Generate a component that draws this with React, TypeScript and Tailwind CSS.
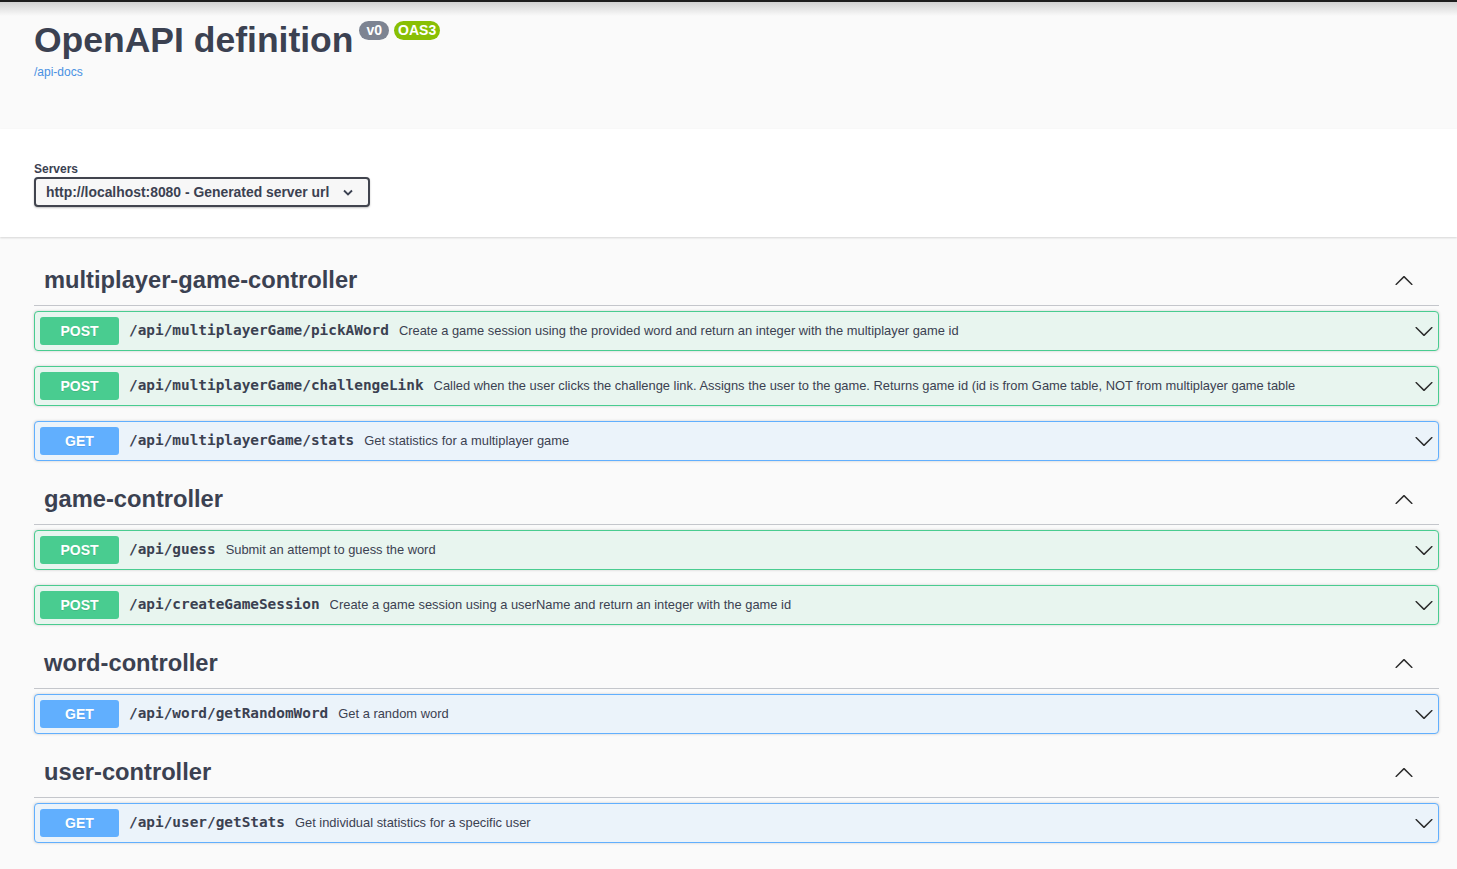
import React from "react";

type Op = { method: "POST" | "GET"; path: string; desc: string };
type Tag = { name: string; ops: Op[] };

const tags: Tag[] = [
  {
    name: "multiplayer-game-controller",
    ops: [
      {
        method: "POST",
        path: "/api/multiplayerGame/pickAWord",
        desc: "Create a game session using the provided word and return an integer with the multiplayer game id",
      },
      {
        method: "POST",
        path: "/api/multiplayerGame/challengeLink",
        desc: "Called when the user clicks the challenge link. Assigns the user to the game. Returns game id (id is from Game table, NOT from multiplayer game table",
      },
      { method: "GET", path: "/api/multiplayerGame/stats", desc: "Get statistics for a multiplayer game" },
    ],
  },
  {
    name: "game-controller",
    ops: [
      { method: "POST", path: "/api/guess", desc: "Submit an attempt to guess the word" },
      {
        method: "POST",
        path: "/api/createGameSession",
        desc: "Create a game session using a userName and return an integer with the game id",
      },
    ],
  },
  {
    name: "word-controller",
    ops: [{ method: "GET", path: "/api/word/getRandomWord", desc: "Get a random word" }],
  },
  {
    name: "user-controller",
    ops: [{ method: "GET", path: "/api/user/getStats", desc: "Get individual statistics for a specific user" }],
  },
];

const ARROW =
  "M17.418 6.109c.272-.268.709-.268.979 0s.271.701 0 .969l-7.908 7.83c-.27.268-.707.268-.979 0l-7.908-7.83c-.27-.268-.27-.701 0-.969.271-.268.709-.268.979 0L10 13.25l7.418-7.141z";

function Arrow({ up }: { up?: boolean }) {
  return (
    <svg
      width="20"
      height="20"
      viewBox="0 0 20 20"
      className={up ? "rotate-180 shrink-0" : "shrink-0"}
    >
      <path d={ARROW} fill="#2b2b2b" />
    </svg>
  );
}

function OpBlock({ op }: { op: Op }) {
  const post = op.method === "POST";
  return (
    <div
      className={
        post
          ? "mb-[15px] rounded-[4px] border border-[#49cc90] bg-[#e8f5ef] shadow-[0_0_3px_rgba(0,0,0,0.19)]"
          : "mb-[15px] rounded-[4px] border border-[#61affe] bg-[#ebf3fa] shadow-[0_0_3px_rgba(0,0,0,0.19)]"
      }
    >
      <div className="flex items-center py-[5px] pl-[5px] pr-[4px]">
        <div
          className={
            post
              ? "flex h-[28px] w-[79px] shrink-0 items-center justify-center rounded-[3px] bg-[#49cc90] text-[14px] font-bold text-white [text-shadow:0_1px_0_rgba(0,0,0,0.1)]"
              : "flex h-[28px] w-[79px] shrink-0 items-center justify-center rounded-[3px] bg-[#61affe] text-[14px] font-bold text-white [text-shadow:0_1px_0_rgba(0,0,0,0.1)]"
          }
          style={{ fontFamily: '"Liberation Sans", Arial, sans-serif' }}
        >
          {op.method}
        </div>
        <span
          className="shrink-0 px-[10px] text-[14.4px] font-bold text-[#3b4151]"
          style={{ fontFamily: '"DejaVu Sans Mono", "Liberation Mono", monospace' }}
        >
          {op.path}
        </span>
        <span
          className="flex-1 truncate text-[12.9px] text-[#3b4151]"
          style={{ fontFamily: '"Liberation Sans", Arial, sans-serif' }}
        >
          {op.desc}
        </span>
        <Arrow />
      </div>
    </div>
  );
}

function TagSection({ tag }: { tag: Tag }) {
  return (
    <div>
      <div className="mb-[5px] flex h-[49px] items-center justify-between border-b border-[#c4c6cb] pl-[10px] pr-[25px]">
        <h3 className="text-[23.7px] font-bold text-[#3b4151]">{tag.name}</h3>
        <Arrow up />
      </div>
      {tag.ops.map((op) => (
        <OpBlock key={op.path} op={op} />
      ))}
    </div>
  );
}

export default function App() {
  return (
    <div
      className="min-h-[869px] bg-[#fafafa] text-[#3b4151]"
      style={{ fontFamily: '"Liberation Sans", Arial, sans-serif' }}
    >
      {/* info */}
      <div className="h-[129px] border-t-2 border-[#1e1e1e]">
        <div className="h-[14px] bg-linear-to-b from-[#d2d2d2] to-[#fafafa]" />
        <div className="pl-[34px] pr-[18px]">
          <div className="mt-[3px] flex items-start">
            <h2 className="text-[35.5px] font-bold leading-[43px] text-[#3b4151]">OpenAPI definition</h2>
            <div className="ml-[6px] mt-[2px] flex gap-[5px]">
              <span className="rounded-full bg-[#7d8492] px-[7px] py-[2px] text-[14px] font-bold leading-[15px] text-white">
                v0
              </span>
              <span className="rounded-full bg-[#89bf04] px-[4px] py-[2px] text-[14px] font-bold leading-[15px] text-white">
                OAS3
              </span>
            </div>
          </div>
          <div className="mt-[3px] text-[12px] leading-[15px] text-[#4990e2]">/api-docs</div>
        </div>
      </div>

      {/* servers */}
      <div className="bg-white pt-[33px] pb-[30px] shadow-[0_1px_2px_0_rgba(0,0,0,0.15)]">
        <div className="pl-[34px] pr-[18px]">
          <div className="text-[12px] font-bold leading-[15px] text-[#3b4151]">Servers</div>
          <div className="flex h-[30px] w-[336px] items-center rounded-[4px] border-2 border-[#41444e] bg-[#f7f7f7] pl-[10px] shadow-[0_1px_2px_0_rgba(0,0,0,0.25)]">
            <span className="text-[13.9px] font-bold text-[#3b4151]">http://localhost:8080 - Generated server url</span>
            <svg width="10" height="7" viewBox="0 0 10 7" className="ml-[14px]">
              <polyline points="1,1.5 5,5.5 9,1.5" fill="none" stroke="#3b4151" strokeWidth="1.8" />
            </svg>
          </div>
        </div>
      </div>

      {/* tags */}
      <div className="pl-[34px] pr-[18px] pt-[20px]">
        {tags.map((t) => (
          <TagSection key={t.name} tag={t} />
        ))}
      </div>
    </div>
  );
}
